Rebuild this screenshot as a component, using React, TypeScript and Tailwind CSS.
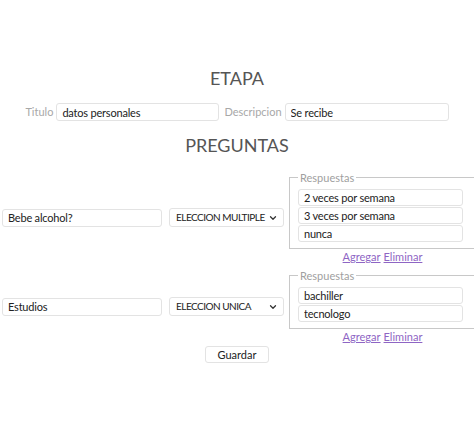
import { ChevronDown } from 'lucide-react'

type Pregunta = {
  texto: string
  tipo: string
  respuestas: string[]
}

const preguntas: Pregunta[] = [
  { texto: 'Bebe alcohol?', tipo: 'ELECCION MULTIPLE', respuestas: ['2 veces por semana', '3 veces por semana', 'nunca'] },
  { texto: 'Estudios', tipo: 'ELECCION UNICA', respuestas: ['bachiller', 'tecnologo'] },
]

const field =
  'block rounded-[3px] border border-[#e3e3e3] bg-white px-[5px] text-[11px] tracking-[-0.2px] text-[#222] outline-none [font-family:Lato,sans-serif]'

function PreguntaRow({ p }: { p: Pregunta }) {
  return (
    <div className="grid grid-cols-[160px_116px_186px] items-center gap-x-[6px]">
      <input readOnly value={p.texto} className={`${field} h-[18px] w-[160px]`} />
      <div className="relative ml-[1px]">
        <div className="flex h-[19px] items-center whitespace-nowrap rounded-[3px] border border-[#e3e3e3] bg-white pl-[6px] text-[10px] tracking-[-0.5px] text-[#222] [font-family:Lato,sans-serif]">
          {p.tipo}
        </div>
        <ChevronDown size={10} strokeWidth={3} className="absolute right-[6px] top-[5px] text-[#333]" />
      </div>
      <div className="-ml-[1px] flex flex-col">
        <fieldset className="border border-[#c8c8c8] pb-[6px] pl-[8px] pr-[9px]">
          <legend className="px-[2px] text-[11px] leading-[13px] text-[#a0a0a0] [font-family:Lato,sans-serif]">
            Respuestas
          </legend>
          <div className="mt-[5px] flex flex-col gap-[1px]">
            {p.respuestas.map((r) => (
              <input key={r} readOnly value={r} className={`${field} h-[17px] w-[165px]`} />
            ))}
          </div>
        </fieldset>
        <div className="mt-[1px] flex justify-center gap-[3px] text-[11px] leading-[14px] text-[#8e65c4] [font-family:Lato,sans-serif]">
          <a className="underline" href="#">Agregar</a>
          <a className="underline" href="#">Eliminar</a>
        </div>
      </div>
    </div>
  )
}

export default function App() {
  return (
    <div className="h-[424px] w-[474px] overflow-hidden bg-white [font-family:Lato,sans-serif]">
      <h2 className="mt-[66px] text-center text-[18px] leading-[24px] text-[#555]">ETAPA</h2>

      <div className="mt-[13px] flex items-center justify-center text-[11px] text-[#a8a8a8]">
        <span className="mr-[3px]">Titulo</span>
        <input readOnly value="datos personales" className={`${field} h-[18px] w-[163px]`} />
        <span className="ml-[5px] mr-[3px]">Descripcion</span>
        <input readOnly value="Se recibe" className={`${field} h-[18px] w-[164px]`} />
      </div>

      <h2 className="mt-[12px] text-center text-[18px] leading-[24px] text-[#555]">PREGUNTAS</h2>

      <div className="mt-[14px] flex flex-col gap-[5px] pl-[2px]">
        {preguntas.map((p) => (
          <PreguntaRow key={p.texto} p={p} />
        ))}
      </div>

      <div className="mt-[2px] flex justify-center">
        <button className="h-[17px] w-[64px] rounded-[3px] border border-[#e3e3e3] bg-white text-[11px] leading-none text-[#222] [font-family:Lato,sans-serif]">
          Guardar
        </button>
      </div>
    </div>
  )
}
